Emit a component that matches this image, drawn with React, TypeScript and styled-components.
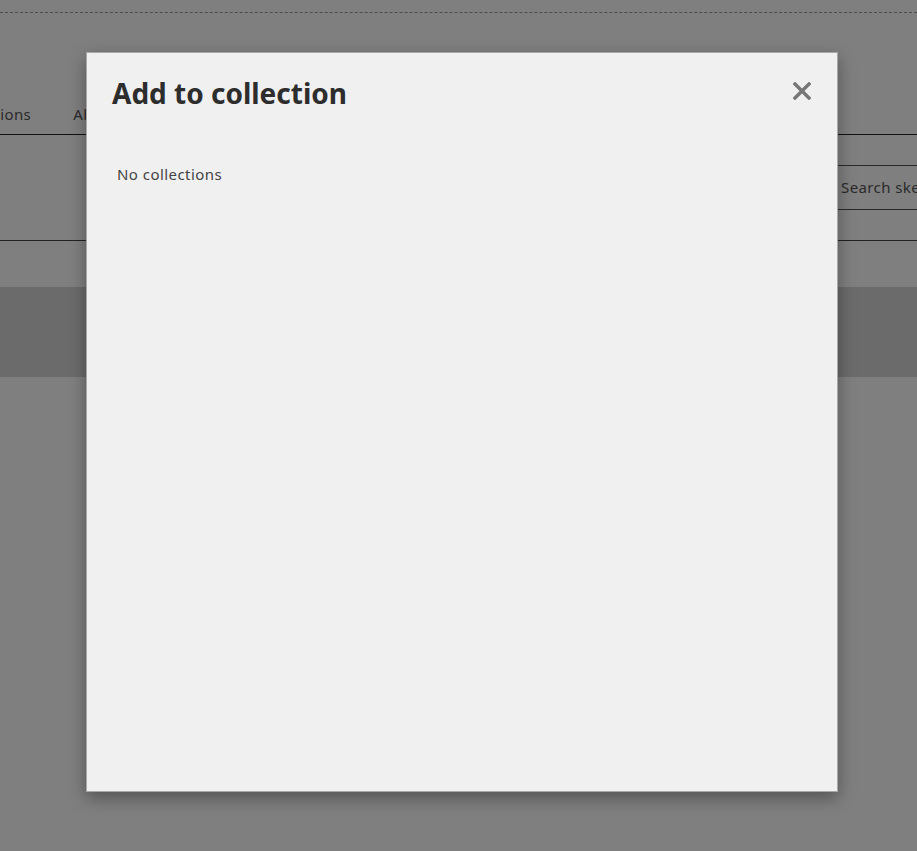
import React from 'react';
import styled, { createGlobalStyle } from 'styled-components';

const GlobalStyle = createGlobalStyle`
  html, body {
    margin: 0;
    padding: 0;
    background: #ffffff;
    font-family: "Noto Sans", "DejaVu Sans", sans-serif;
    overflow: hidden;
  }
  #root {
    width: 917px;
    height: 851px;
    overflow: hidden;
  }
`;

const Page = styled.div`
  position: relative;
  width: 917px;
  height: 851px;
  overflow: hidden;
  background: #ffffff;
`;

const TopBar = styled.div`
  height: 12px;
  border-bottom: 1px dashed #999;
`;

const Tabs = styled.nav`
  display: flex;
  align-items: flex-end;
  gap: 42px;
  height: 121px;
  margin-left: -50px;
  border-bottom: 1px solid #222;
`;

const Tab = styled.span`
  font-size: 15px;
  letter-spacing: 0.4px;
  color: #555;
  padding-bottom: 10px;
`;

const SearchRow = styled.div`
  display: flex;
  justify-content: flex-end;
  height: 106px;
  padding-top: 30px;
  box-sizing: border-box;
  border-bottom: 1px solid #444;
`;

const SearchInput = styled.div`
  flex-shrink: 0;
  width: 340px;
  height: 45px;
  margin-right: -256px;
  box-sizing: border-box;
  border: 1px solid #555;
  border-right: none;
  padding-left: 7px;
  padding-bottom: 2px;
  display: flex;
  align-items: center;
  font-size: 15px;
  letter-spacing: 0.4px;
  color: #555;
`;

const Band = styled.div`
  margin-top: 46px;
  height: 90px;
  background: #d6d6d6;
`;

const Overlay = styled.div`
  position: absolute;
  inset: 0;
  background: rgba(0, 0, 0, 0.5);
`;

const Modal = styled.div`
  position: absolute;
  left: 86px;
  top: 52px;
  width: 752px;
  height: 740px;
  box-sizing: border-box;
  background: #f0f0f0;
  border: 1px solid #a8a8a8;
  box-shadow: 0 6px 16px rgba(0, 0, 0, 0.35);
  padding: 20px 25px;
`;

const ModalHeader = styled.div`
  display: flex;
  justify-content: space-between;
  align-items: center;
`;

const Title = styled.h2`
  margin: 0;
  font-size: 28px;
  font-weight: 700;
  letter-spacing: 0;
  color: #2d2d2d;
  line-height: 40px;
`;

const CloseButton = styled.button`
  border: none;
  background: transparent;
  padding: 0;
  margin-right: 0;
  margin-top: -4px;
  width: 20px;
  height: 20px;
  display: flex;
  align-items: center;
  justify-content: center;
  cursor: pointer;
`;

const Empty = styled.p`
  margin: 51px 0 0 5px;
  font-size: 15px;
  letter-spacing: 0.45px;
  color: #444;
`;

export default function App() {
  return (
    <>
      <GlobalStyle />
      <Page>
        <TopBar />
        <Tabs>
          <Tab>Collections</Tab>
          <Tab>About</Tab>
        </Tabs>
        <SearchRow>
          <SearchInput>Search sketches</SearchInput>
        </SearchRow>
        <Band />
        <Overlay />
        <Modal role="dialog" aria-label="Add to collection">
          <ModalHeader>
            <Title>Add to collection</Title>
            <CloseButton aria-label="Close">
              <svg width="18" height="18" viewBox="0 0 18 18">
                <path d="M2 2 L16 16 M16 2 L2 16" stroke="#777" strokeWidth="3.4" strokeLinecap="square" />
              </svg>
            </CloseButton>
          </ModalHeader>
          <Empty>No collections</Empty>
        </Modal>
      </Page>
    </>
  );
}
